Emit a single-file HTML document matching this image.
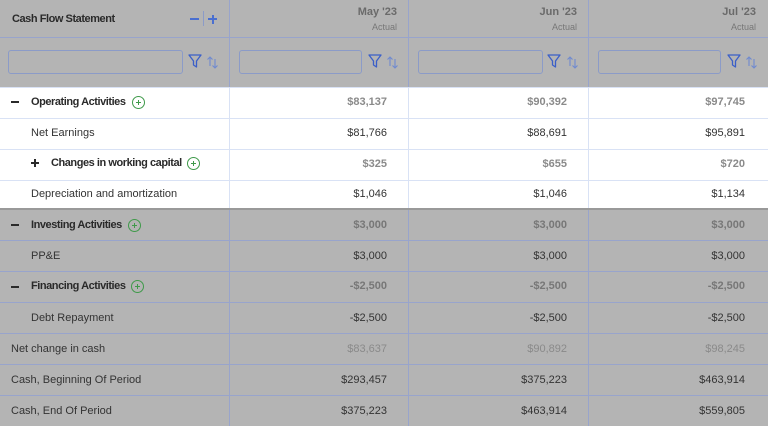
<!DOCTYPE html>
<html><head><style>
*{margin:0;padding:0;box-sizing:border-box}
body{width:768px;height:426px;overflow:hidden;background:#b4b4b4;font-family:"Liberation Sans",sans-serif;position:relative}
.a{position:absolute}
.vl{position:absolute;width:1px;background:#98a4cc}
.hl{position:absolute;left:0;width:768px;height:1px;background:#98a4cc}
.t{position:absolute;font-size:11px;color:#333;white-space:nowrap;line-height:14px}
.b{font-weight:bold;color:#2a2a2a}
.lb{letter-spacing:-0.45px}
.r{text-align:right}
.g{color:#8a8a8a}
.inp{position:absolute;top:50px;height:24px;border:1px solid #8b9bc8;border-radius:3px}
.pl{position:absolute;width:13px;height:13px;border:1.3px solid #3f9a4a;border-radius:50%}
.pl:before{content:"";position:absolute;left:2.5px;top:4.7px;width:5.5px;height:1.3px;background:#3f9a4a}
.pl:after{content:"";position:absolute;left:4.6px;top:2.6px;width:1.3px;height:5.5px;background:#3f9a4a}
.dash{position:absolute;width:8px;height:2px;background:#2a2a2a}
</style></head><body>
<div class="a" style="left:0;top:87px;width:768px;height:122px;background:#fff"></div>
<div class="hl" style="top:37px"></div>
<div class="hl" style="top:87px;background:#d9e2f5"></div>
<div class="hl" style="top:118px;background:#d9e2f5"></div>
<div class="hl" style="top:149px;background:#d9e2f5"></div>
<div class="hl" style="top:180px;background:#d9e2f5"></div>
<div class="hl" style="top:208px;height:2px;background:#999"></div>
<div class="hl" style="top:240px"></div>
<div class="hl" style="top:271px"></div>
<div class="hl" style="top:302px"></div>
<div class="hl" style="top:333px"></div>
<div class="hl" style="top:364px"></div>
<div class="hl" style="top:395px"></div>
<div class="vl" style="left:229px;top:0;height:87px"></div><div class="vl" style="left:229px;top:87px;height:121px;background:#d9e2f5"></div><div class="vl" style="left:229px;top:210px;height:216px"></div>
<div class="vl" style="left:408px;top:0;height:87px"></div><div class="vl" style="left:408px;top:87px;height:121px;background:#d9e2f5"></div><div class="vl" style="left:408px;top:210px;height:216px"></div>
<div class="vl" style="left:588px;top:0;height:87px"></div><div class="vl" style="left:588px;top:87px;height:121px;background:#d9e2f5"></div><div class="vl" style="left:588px;top:210px;height:216px"></div>

<div class="t b lb" style="left:12px;top:12px">Cash Flow Statement</div>
<div class="a" style="left:190px;top:18px;width:9px;height:2px;background:#4a6fd0"></div>
<div class="a" style="left:203px;top:11px;width:1px;height:15px;background:#8b9bc8"></div>
<div class="a" style="left:208px;top:18px;width:9px;height:2px;background:#4a6fd0"></div>
<div class="a" style="left:211.5px;top:14.5px;width:2px;height:9px;background:#4a6fd0"></div>

<div class="t b r" style="right:371px;top:5px;width:80px;color:#6a6a6a">May '23</div>
<div class="t r" style="right:371px;top:20px;width:80px;font-size:9px;color:#777">Actual</div>
<div class="t b r" style="right:191px;top:5px;width:80px;color:#6a6a6a">Jun '23</div>
<div class="t r" style="right:191px;top:20px;width:80px;font-size:9px;color:#777">Actual</div>
<div class="t b r" style="right:12px;top:5px;width:80px;color:#6a6a6a">Jul '23</div>
<div class="t r" style="right:12px;top:20px;width:80px;font-size:9px;color:#777">Actual</div>

<div class="inp" style="left:8px;width:175px"></div>
<div class="inp" style="left:239px;width:123px"></div>
<div class="inp" style="left:418px;width:125px"></div>
<div class="inp" style="left:598px;width:123px"></div>
<svg class="a" style="left:0;top:0" width="768" height="87">
<g fill="none" stroke="#3b5fc8" stroke-width="1.3" stroke-linejoin="round">
<path d="M189 55h12l-4.5 6v6l-3-2v-4z"/><path d="M369 55h12l-4.5 6v6l-3-2v-4z"/><path d="M548 55h12l-4.5 6v6l-3-2v-4z"/><path d="M728 55h12l-4.5 6v6l-3-2v-4z"/>
</g>
<g fill="none" stroke="#6f8ad0" stroke-width="1.1">
<path d="M210 66v-9m-2.5 2.5l2.5-2.5l2.5 2.5M215 59v9m-2.5-2.5l2.5 2.5l2.5-2.5"/>
<path d="M390 66v-9m-2.5 2.5l2.5-2.5l2.5 2.5M395 59v9m-2.5-2.5l2.5 2.5l2.5-2.5"/>
<path d="M570 66v-9m-2.5 2.5l2.5-2.5l2.5 2.5M575 59v9m-2.5-2.5l2.5 2.5l2.5-2.5"/>
<path d="M749 66v-9m-2.5 2.5l2.5-2.5l2.5 2.5M754 59v9m-2.5-2.5l2.5 2.5l2.5-2.5"/>
</g></svg>

<!-- rows -->
<div class="dash" style="left:11px;top:101px"></div>
<div class="t b lb" style="left:31px;top:95px">Operating Activities</div><div class="pl" style="left:132px;top:96px"></div>
<div class="t" style="left:31px;top:126px">Net Earnings</div>
<div class="dash" style="left:31px;top:162px"></div><div class="dash" style="left:34px;top:159px;width:2px;height:8px"></div>
<div class="t b lb" style="left:51px;top:156px">Changes in working capital</div><div class="pl" style="left:187px;top:157px"></div>
<div class="t" style="left:31px;top:187px">Depreciation and amortization</div>
<div class="dash" style="left:11px;top:224px"></div>
<div class="t b lb" style="left:31px;top:218px">Investing Activities</div><div class="pl" style="left:128px;top:219px"></div>
<div class="t" style="left:31px;top:249px">PP&amp;E</div>
<div class="dash" style="left:11px;top:286px"></div>
<div class="t b lb" style="left:31px;top:279px">Financing Activities</div><div class="pl" style="left:131px;top:280px"></div>
<div class="t" style="left:31px;top:311px">Debt Repayment</div>
<div class="t" style="left:11px;top:342px">Net change in cash</div>
<div class="t" style="left:11px;top:373px">Cash, Beginning Of Period</div>
<div class="t" style="left:11px;top:404px">Cash, End Of Period</div>

<div class="a" style="left:0;top:0">
<div class="t b r g" style="left:287px;top:95px;width:100px">$83,137</div>
<div class="t r" style="left:287px;top:126px;width:100px">$81,766</div>
<div class="t b r g" style="left:287px;top:157px;width:100px">$325</div>
<div class="t r" style="left:287px;top:187px;width:100px">$1,046</div>
<div class="t b r g" style="left:287px;top:218px;width:100px;color:#777">$3,000</div>
<div class="t r" style="left:287px;top:249px;width:100px">$3,000</div>
<div class="t b r g" style="left:287px;top:279px;width:100px;color:#777">-$2,500</div>
<div class="t r" style="left:287px;top:311px;width:100px">-$2,500</div>
<div class="t r g" style="left:287px;top:342px;width:100px">$83,637</div>
<div class="t r" style="left:287px;top:373px;width:100px">$293,457</div>
<div class="t r" style="left:287px;top:404px;width:100px">$375,223</div>

<div class="t b r g" style="left:467px;top:95px;width:100px">$90,392</div>
<div class="t r" style="left:467px;top:126px;width:100px">$88,691</div>
<div class="t b r g" style="left:467px;top:157px;width:100px">$655</div>
<div class="t r" style="left:467px;top:187px;width:100px">$1,046</div>
<div class="t b r g" style="left:467px;top:218px;width:100px;color:#777">$3,000</div>
<div class="t r" style="left:467px;top:249px;width:100px">$3,000</div>
<div class="t b r g" style="left:467px;top:279px;width:100px;color:#777">-$2,500</div>
<div class="t r" style="left:467px;top:311px;width:100px">-$2,500</div>
<div class="t r g" style="left:467px;top:342px;width:100px">$90,892</div>
<div class="t r" style="left:467px;top:373px;width:100px">$375,223</div>
<div class="t r" style="left:467px;top:404px;width:100px">$463,914</div>

<div class="t b r g" style="left:645px;top:95px;width:100px">$97,745</div>
<div class="t r" style="left:645px;top:126px;width:100px">$95,891</div>
<div class="t b r g" style="left:645px;top:157px;width:100px">$720</div>
<div class="t r" style="left:645px;top:187px;width:100px">$1,134</div>
<div class="t b r g" style="left:645px;top:218px;width:100px;color:#777">$3,000</div>
<div class="t r" style="left:645px;top:249px;width:100px">$3,000</div>
<div class="t b r g" style="left:645px;top:279px;width:100px;color:#777">-$2,500</div>
<div class="t r" style="left:645px;top:311px;width:100px">-$2,500</div>
<div class="t r g" style="left:645px;top:342px;width:100px">$98,245</div>
<div class="t r" style="left:645px;top:373px;width:100px">$463,914</div>
<div class="t r" style="left:645px;top:404px;width:100px">$559,805</div>
</div>
</body></html>
